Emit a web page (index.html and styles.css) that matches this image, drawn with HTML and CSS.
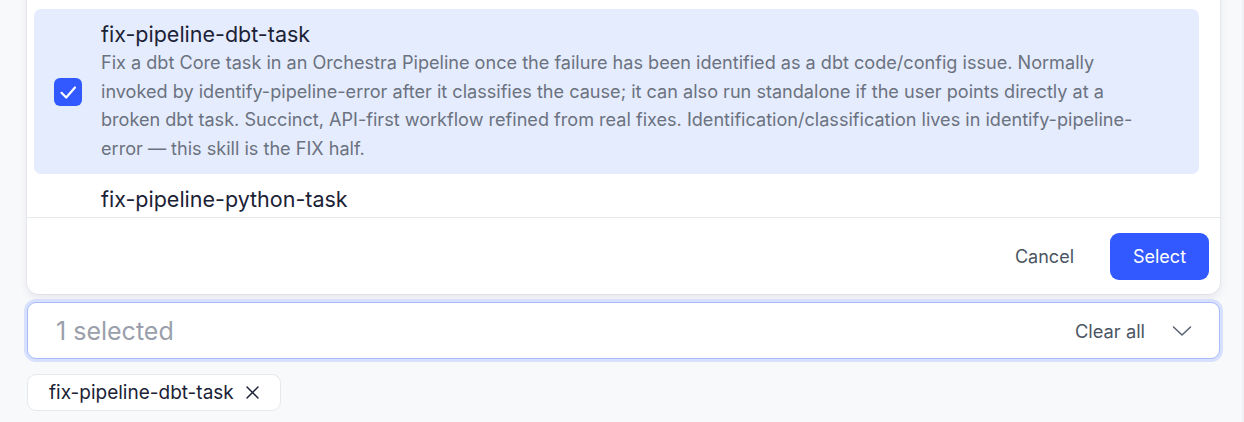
FILE: index.html
```html
<!DOCTYPE html>
<html lang="en">
<head>
    <meta charset="UTF-8">
    <meta name="viewport" content="width=device-width, initial-scale=1.0">
    <title>Select skills</title>
    <link rel="stylesheet" href="styles.css">
</head>
<body>
    <div class="page">
        <div class="picker">
            <div class="options">
                <div class="option selected">
                    <span class="check">
                        <svg width="28" height="28" viewBox="0 0 28 28"><path d="M7.5 14.8 L12.2 19.5 L21 9.5" fill="none" stroke="#fff" stroke-width="2.2" stroke-linecap="round" stroke-linejoin="round"/></svg>
                    </span>
                    <div class="option-text">
                        <div class="option-title">fix-pipeline-dbt-task</div>
                        <div class="option-desc">Fix a dbt Core task in an Orchestra Pipeline once the failure has been identified as a dbt code/config issue. Normally invoked by identify-pipeline-error after it classifies the cause; it can also run standalone if the user points directly at a broken dbt task. Succinct, API-first workflow refined from real fixes. Identification/classification lives in identify-pipeline-error — this skill is the FIX half.</div>
                    </div>
                </div>
                <div class="option">
                    <span class="check empty"></span>
                    <div class="option-text">
                        <div class="option-title">fix-pipeline-python-task</div>
                    </div>
                </div>
            </div>
            <div class="picker-footer">
                <button class="btn btn-ghost">Cancel</button>
                <button class="btn btn-primary">Select</button>
            </div>
        </div>

        <div class="select-box">
            <span class="placeholder">1 selected</span>
            <span class="clear">Clear all</span>
            <svg class="chevron" width="20" height="12" viewBox="0 0 20 12"><path d="M1.5 2 L10 10 L18.5 2" fill="none" stroke="#5b6472" stroke-width="1.6" stroke-linecap="round" stroke-linejoin="round"/></svg>
        </div>

        <div class="chips">
            <span class="chip">fix-pipeline-dbt-task
                <svg width="13" height="13" viewBox="0 0 13 13"><path d="M1 1 L12 12 M12 1 L1 12" stroke="#1b2236" stroke-width="1.5" stroke-linecap="round"/></svg>
            </span>
        </div>
    </div>
</body>
</html>
```

FILE: styles.css
```css
* { box-sizing: border-box; }
body {
    margin: 0;
    background: #f8f9fb;
    font-family: 'Inter', 'Noto Sans', sans-serif;
    color: #1b2236;
    border-right: 2px solid #eef0f3;
    min-height: 100vh;
    overflow: hidden;
}
.page {
    width: 1193px;
    margin-left: 27px;
}
.picker {
    margin-top: -12px;
    background: #fff;
    border-radius: 0 0 12px 12px;
    box-shadow: 0 4px 10px rgba(20, 30, 50, 0.08), 0 0 0 1px rgba(20, 30, 50, 0.04);
}
.options {
    height: 230px;
    overflow: hidden;
    padding: 21px 21px 0 7px;
    border-bottom: 1px solid #e6e8ec;
}
.option {
    display: flex;
    align-items: flex-start;
    padding: 12px 40px 11px 20px;
    border-radius: 7px;
}
.option.selected {
    align-items: center;
    background: #e5ecfd;
}
.check {
    flex: 0 0 28px;
    width: 28px;
    height: 28px;
    border-radius: 6px;
    background: #3159ff;
    margin-right: 19px;
    display: flex;
}
.check.empty {
    background: #fff;
    border: 1.5px solid #c9ced8;
    margin-top: 40px;
}
.option-text {
    flex: 1;
    min-width: 0;
}
.option-title {
    font-size: 21.5px;
    line-height: 27px;
    color: #1b2236;
}
.option-desc {
    font-size: 18.1px;
    line-height: 28.7px;
    color: #6b7280;
}
.picker-footer {
    display: flex;
    justify-content: flex-end;
    align-items: center;
    gap: 16px;
    padding: 15px 11px 14px;
}
.btn {
    font-family: inherit;
    font-size: 18px;
    border: none;
    cursor: pointer;
    height: 47px;
    border-radius: 9px;
    padding: 0 22px;
}
.btn-ghost {
    background: none;
    color: #4b5563;
    padding: 0 20px;
}
.btn-primary {
    background: #3159ff;
    color: #fff;
    width: 99px;
}
.select-box {
    margin-top: 8px;
    height: 57px;
    background: #fff;
    border: 1px solid #a9bbfb;
    border-radius: 9px;
    box-shadow: 0 0 0 3px #d7e0fc;
    display: flex;
    align-items: center;
    padding: 0 27px 0 28px;
}
.placeholder {
    flex: 1;
    font-size: 25px;
    color: #9aa0ab;
}
.clear {
    font-size: 18.3px;
    color: #4b5563;
    margin-right: 27px;
}
.chips {
    margin-top: 15px;
    display: flex;
}
.chip {
    display: inline-flex;
    align-items: center;
    gap: 12px;
    height: 37px;
    padding: 0 21px 0 21px;
    background: #fff;
    border: 1px solid #e6e8ec;
    border-radius: 9px;
    font-size: 19px;
    color: #1b2236;
}
```
